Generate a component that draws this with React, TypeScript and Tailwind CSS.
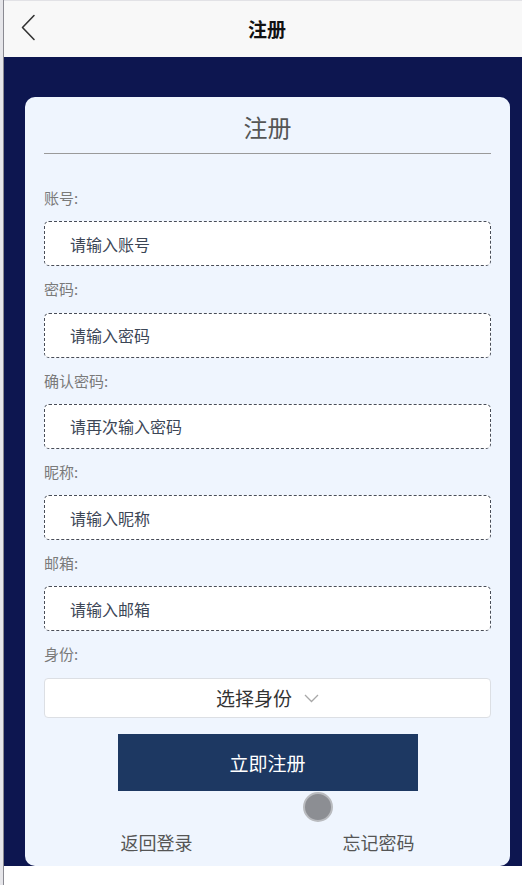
import React from "react";

const fields = [
  { label: "账号:", ph: "请输入账号" },
  { label: "密码:", ph: "请输入密码" },
  { label: "确认密码:", ph: "请再次输入密码" },
  { label: "昵称:", ph: "请输入昵称" },
  { label: "邮箱:", ph: "请输入邮箱" },
];

export default function App() {
  return (
    <div
      className="flex h-[885px] w-[522px] bg-white overflow-hidden"
      style={{ fontFamily: '"Noto Sans CJK SC", "Noto Sans", sans-serif' }}
    >
      <div className="w-[3px] bg-[#e6e6ea]" />
      <div className="w-px bg-[#8a8a92]" />
      <div className="flex flex-1 flex-col">
        <div className="relative flex h-[57px] items-center justify-center border-t border-[#e2e2e6] bg-[#f8f8f8]">
          <svg
            className="absolute left-[17px] top-[13px]"
            width="16"
            height="28"
            viewBox="0 0 16 28"
            fill="none"
          >
            <path d="M13 1.5 L1.5 13.5 L13 25.5" stroke="#333" strokeWidth="1.6" strokeLinecap="round" strokeLinejoin="round" />
          </svg>
          <span className="ml-[8px] text-[19px] font-bold leading-[24px] text-[#111]">注册</span>
        </div>
        <div className="bg-[#0d1650] pl-[21px] pr-[12px] pt-[40px]">
          <div className="relative rounded-[10px] bg-[#eff5fe] px-[19px] pb-[12px]">
            <div className="pt-[14px] text-center text-[24px] leading-[32px] text-[#555]">注册</div>
            <div className="mt-[10px] h-px bg-[#9a9a9a]" />
            <div className="pt-[21px]">
              {fields.map((f) => (
                <div key={f.label}>
                  <div className="mt-[11px] mb-[11.25px] text-[15px] leading-[24px] text-[#7a7a7a]">{f.label}</div>
                  <div className="flex h-[45px] items-center rounded-[5px] border border-dashed border-[#484d58] bg-white pl-[25px] text-[16px] text-[#3c4656]">
                    {f.ph}
                  </div>
                </div>
              ))}
              <div className="mt-[11px] mb-[12px] text-[15px] leading-[24px] text-[#7a7a7a]">身份:</div>
              <div className="flex h-[40px] items-center justify-center gap-[12px] rounded-[4px] border border-[#dcdfe4] bg-white">
                <span className="text-[19px] leading-[24px] text-[#333]">选择身份</span>
                <svg width="15" height="9" viewBox="0 0 15 9" fill="none">
                  <path d="M1 1 L7.5 7.5 L14 1" stroke="#a8a8a8" strokeWidth="1.3" />
                </svg>
              </div>
              <div className="mt-[16px] flex justify-center">
                <div className="flex h-[57px] w-[300px] items-center justify-center bg-[#1d3862] text-[19px] text-white">
                  立即注册
                </div>
              </div>
              <div className="mx-auto mt-[39px] flex w-[300px] justify-between px-[3px] text-[18px] leading-[24px] text-[#555]">
                <span>返回登录</span>
                <span>忘记密码</span>
              </div>
            </div>
            <div className="absolute left-[278px] top-[695px] h-[30px] w-[30px] rounded-full border-[2px] border-[#b9bbbf] bg-[#8c8e93]" />
          </div>
        </div>
      </div>
    </div>
  );
}
